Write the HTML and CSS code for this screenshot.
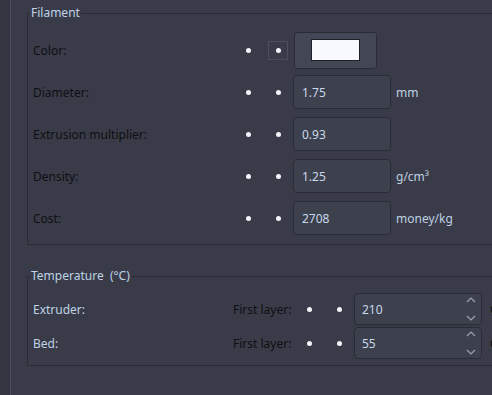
FILE: index.html
```html
<!DOCTYPE html>
<html>
<head>
<meta charset="utf-8">
<link rel="stylesheet" href="styles.css">
</head>
<body>
<div class="app">
  <div class="sidebar"></div>
  <div class="content">
    <fieldset class="group filament">
      <legend>Filament</legend>
      <div class="row">
        <span class="label">Color:</span>
        <span class="dotbox"><i class="dot"></i></span>
        <span class="dotbox framed"><i class="dot"></i></span>
        <button class="color-btn"><span class="swatch"></span></button>
      </div>
      <div class="row">
        <span class="label">Diameter:</span>
        <span class="dotbox"><i class="dot"></i></span>
        <span class="dotbox"><i class="dot"></i></span>
        <span class="field">1.75</span>
        <span class="unit">mm</span>
      </div>
      <div class="row">
        <span class="label">Extrusion multiplier:</span>
        <span class="dotbox"><i class="dot"></i></span>
        <span class="dotbox"><i class="dot"></i></span>
        <span class="field">0.93</span>
      </div>
      <div class="row">
        <span class="label">Density:</span>
        <span class="dotbox"><i class="dot"></i></span>
        <span class="dotbox"><i class="dot"></i></span>
        <span class="field">1.25</span>
        <span class="unit">g/cm³</span>
      </div>
      <div class="row">
        <span class="label">Cost:</span>
        <span class="dotbox"><i class="dot"></i></span>
        <span class="dotbox"><i class="dot"></i></span>
        <span class="field">2708</span>
        <span class="unit">money/kg</span>
      </div>
    </fieldset>

    <fieldset class="group temperature">
      <legend>Temperature  (°C)</legend>
      <div class="trow">
        <span class="tlabel">Extruder:</span>
        <span class="sublabel">First layer:</span>
        <span class="dotbox"><i class="dot"></i></span>
        <span class="dotbox"><i class="dot"></i></span>
        <span class="spin">
          <span class="spin-val">210</span>
          <span class="arrows">
            <svg width="10" height="6" viewBox="0 0 10 6"><path d="M1 5 L5 1 L9 5" fill="none" stroke="#9da2ae" stroke-width="1.2"/></svg>
            <svg width="10" height="6" viewBox="0 0 10 6"><path d="M1 1 L5 5 L9 1" fill="none" stroke="#9da2ae" stroke-width="1.2"/></svg>
          </span>
        </span>
        <span class="sublabel other">Other layers:</span>
      </div>
      <div class="trow">
        <span class="tlabel">Bed:</span>
        <span class="sublabel">First layer:</span>
        <span class="dotbox"><i class="dot"></i></span>
        <span class="dotbox"><i class="dot"></i></span>
        <span class="spin">
          <span class="spin-val">55</span>
          <span class="arrows">
            <svg width="10" height="6" viewBox="0 0 10 6"><path d="M1 5 L5 1 L9 5" fill="none" stroke="#9da2ae" stroke-width="1.2"/></svg>
            <svg width="10" height="6" viewBox="0 0 10 6"><path d="M1 1 L5 5 L9 1" fill="none" stroke="#9da2ae" stroke-width="1.2"/></svg>
          </span>
        </span>
        <span class="sublabel other">Other layers:</span>
      </div>
    </fieldset>
  </div>
</div>
</body>
</html>
```

FILE: styles.css
```css
* { box-sizing: border-box; }
html, body {
  margin: 0;
  padding: 0;
  width: 492px;
  height: 395px;
  overflow: hidden;
  background: #393c48;
  font-family: "Noto Sans", "Open Sans", sans-serif;
  font-size: 12px;
}
.app {
  display: flex;
  height: 395px;
}
.sidebar {
  width: 11px;
  flex: none;
  background: #343641;
  border-right: 1px solid #4a4e60;
}
.content {
  flex: 1;
  min-width: 0;
  padding-left: 16px;
  padding-top: 4px;
}
.group {
  margin: 0;
  width: 520px;
  border: 1px solid #2a2c35;
  border-right: none;
  padding: 7px 0 5px 5px;
}
.group legend {
  color: #bfd2e6;
  font-size: 12px;
  line-height: 18px;
  padding: 0 1px;
  margin-left: -3px;
  white-space: pre;
}
.temperature {
  margin-top: 22px;
  padding-bottom: 5px;
}
.row {
  display: flex;
  align-items: center;
  height: 42px;
}
.label {
  width: 205px;
  color: #0e0f12;
  flex: none;
}
.dotbox {
  width: 20px;
  height: 19px;
  flex: none;
  display: flex;
  align-items: center;
  justify-content: center;
  margin-right: 10px;
}
.dotbox + .dotbox { margin-right: 5px; }
.dotbox.framed {
  border: 1px solid #4b4f5d;
}
.dot {
  display: block;
  width: 5px;
  height: 5px;
  border-radius: 50%;
  background: #f4f5fa;
}
.color-btn {
  margin: 0 0 0 1px;
  width: 83px;
  height: 37px;
  background: #424655;
  border: 1px solid #2a2c35;
  border-radius: 3px;
  display: flex;
  align-items: center;
  justify-content: center;
  padding: 0;
}
.swatch {
  display: block;
  width: 49px;
  height: 22px;
  background: #f8f9ff;
  border: 1px solid #1e2028;
}
.field {
  width: 98px;
  height: 34px;
  flex: none;
  background: #3d414d;
  border: 1px solid #2a2c35;
  border-radius: 4px;
  color: #c8d7ec;
  display: flex;
  align-items: center;
  padding-left: 8px;
}
.unit {
  color: #bfd0e2;
  margin-left: 5px;
}
.trow {
  display: flex;
  align-items: center;
  height: 34px;
}
.tlabel {
  width: 200px;
  flex: none;
  color: #bfd2e6;
}
.sublabel {
  width: 66px;
  flex: none;
  color: #0e0f12;
  white-space: nowrap;
}
.sublabel.other {
  margin-left: 8px;
}
.spin {
  width: 128px;
  height: 32px;
  flex: none;
  background: #3d414d;
  border: 1px solid #2a2c35;
  border-radius: 4px;
  display: flex;
  align-items: center;
  justify-content: space-between;
  padding: 0 5px 0 7px;
}
.spin-val {
  color: #c8d7ec;
}
.arrows {
  display: flex;
  flex-direction: column;
  justify-content: space-between;
  height: 24px;
}
.arrows svg { display: block; }
```
